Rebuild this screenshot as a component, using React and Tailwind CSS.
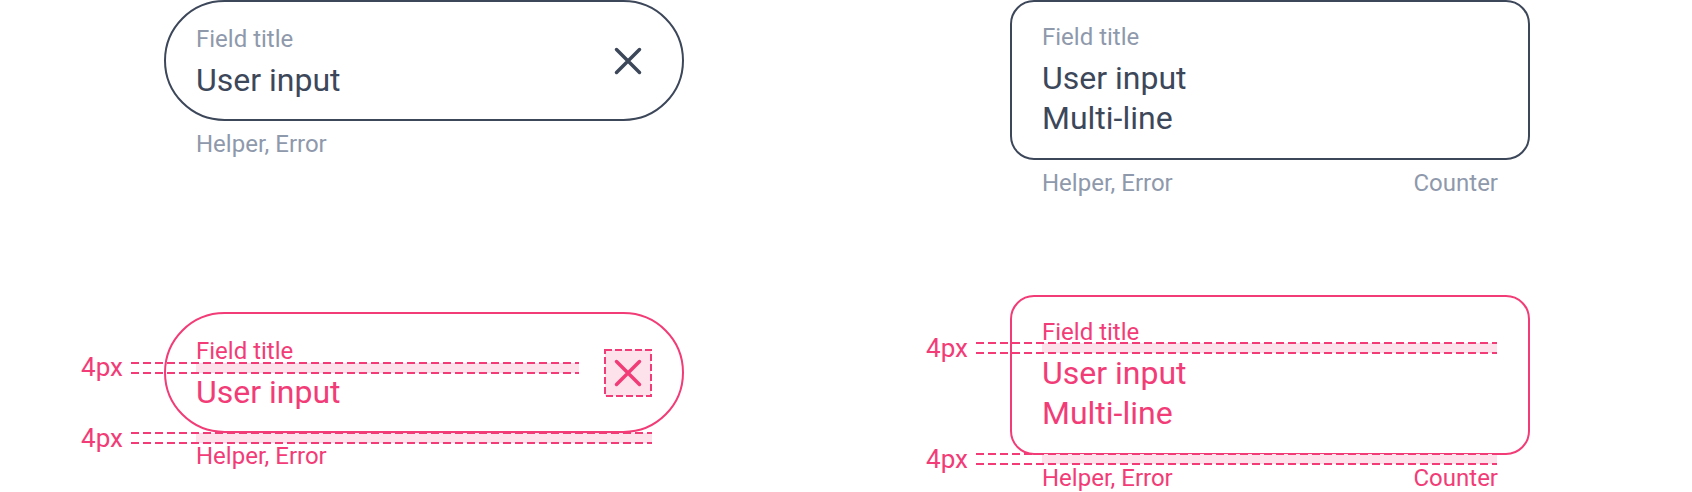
import React from "react";

function CloseIcon({ error }) {
  return (
    <svg width="48" height="48" viewBox="0 0 48 48" className="shrink-0">
      {error && (
        <rect x="1" y="1" width="46" height="46" fill="#fde2ec" stroke="#f23c77" strokeWidth="2" strokeDasharray="7 3" />
      )}
      <path
        d="M12.5 12.5L35.5 35.5M35.5 12.5L12.5 35.5"
        stroke={error ? "#f23c77" : "#3d475a"}
        strokeWidth="3.5"
        strokeLinecap="round"
        fill="none"
      />
    </svg>
  );
}

function Pill({ error }) {
  return (
    <div>
      <div
        className={
          "h-[121px] rounded-full border-2 flex items-center pl-[30px] pr-[30px] gap-[24px] " +
          (error ? "border-[#f23c77]" : "border-[#3d475a]")
        }
      >
        <div className="flex-1 mt-[5px] flex flex-col">
          <div className={"text-[24px] leading-[24px] " + (error ? "text-[#f23c77]" : "text-[#8f99ac]")}>Field title</div>
          <div className={"mt-[9px] text-[32px] leading-[40px] " + (error ? "text-[#f23c77]" : "text-[#3d475a]")}>User input</div>
        </div>
        <CloseIcon error={error} />
      </div>
      <div className={"mt-[9px] pl-[32px] text-[24px] leading-[28px] " + (error ? "text-[#f23c77]" : "text-[#8f99ac]")}>
        Helper, Error
      </div>
    </div>
  );
}

function Area({ error }) {
  return (
    <div>
      <div
        className={
          "h-[160px] rounded-[24px] border-2 px-[30px] pt-[23px] " +
          (error ? "border-[#f23c77]" : "border-[#3d475a]")
        }
      >
        <div className={"text-[24px] leading-[24px] " + (error ? "text-[#f23c77]" : "text-[#8f99ac]")}>Field title</div>
        <div className={"mt-[9px] text-[32px] leading-[40px] " + (error ? "text-[#f23c77]" : "text-[#3d475a]")}>
          <div>User input</div>
          <div>Multi-line</div>
        </div>
      </div>
      <div
        className={
          "mt-[9px] px-[32px] flex justify-between text-[24px] leading-[28px] " +
          (error ? "text-[#f23c77]" : "text-[#8f99ac]")
        }
      >
        <span>Helper, Error</span>
        <span>Counter</span>
      </div>
    </div>
  );
}

function Pair({ y, x1, x2, fx }) {
  return (
    <g>
      <rect x={fx} y={y} width={x2 - fx} height="10" fill="#fde2ec" />
      <line x1={x1} x2={x2} y1={y} y2={y} stroke="#f23c77" strokeWidth="2" strokeDasharray="8 4" />
      <line x1={x1} x2={x2} y1={y + 10} y2={y + 10} stroke="#f23c77" strokeWidth="2" strokeDasharray="8 4" />
    </g>
  );
}

function PillAnnotations() {
  return (
    <>
      <svg className="absolute left-[-40px] top-0 overflow-visible pointer-events-none" width="580" height="140">
        <Pair y={51} x1={7} x2={455} fx={72} />
        <Pair y={121} x1={7} x2={528} fx={72} />
      </svg>
      <div className="absolute left-[-96px] top-[40px] w-[55px] text-right text-[26px] leading-[30px] text-[#f23c77]">4px</div>
      <div className="absolute left-[-96px] top-[111px] w-[55px] text-right text-[26px] leading-[30px] text-[#f23c77]">4px</div>
    </>
  );
}

function AreaAnnotations() {
  return (
    <>
      <svg className="absolute left-[-40px] top-0 overflow-visible pointer-events-none" width="580" height="180">
        <Pair y={48} x1={6} x2={527} fx={72} />
        <Pair y={159} x1={6} x2={527} fx={72} />
      </svg>
      <div className="absolute left-[-97px] top-[38px] w-[55px] text-right text-[26px] leading-[30px] text-[#f23c77]">4px</div>
      <div className="absolute left-[-97px] top-[149px] w-[55px] text-right text-[26px] leading-[30px] text-[#f23c77]">4px</div>
    </>
  );
}

export default function App() {
  return (
    <div className="w-[1692px] h-[492px] bg-white overflow-hidden font-['Roboto',sans-serif]">
      <div className="flex items-start pl-[164px] gap-[326px]">
        <div className="w-[520px]">
          <Pill />
        </div>
        <div className="w-[520px]">
          <Area />
        </div>
      </div>
      <div className="flex items-start pl-[164px] gap-[326px] mt-[98px]">
        <div className="w-[520px] mt-[17px] relative">
          <Pill error />
          <PillAnnotations />
        </div>
        <div className="w-[520px] relative">
          <Area error />
          <AreaAnnotations />
        </div>
      </div>
    </div>
  );
}
